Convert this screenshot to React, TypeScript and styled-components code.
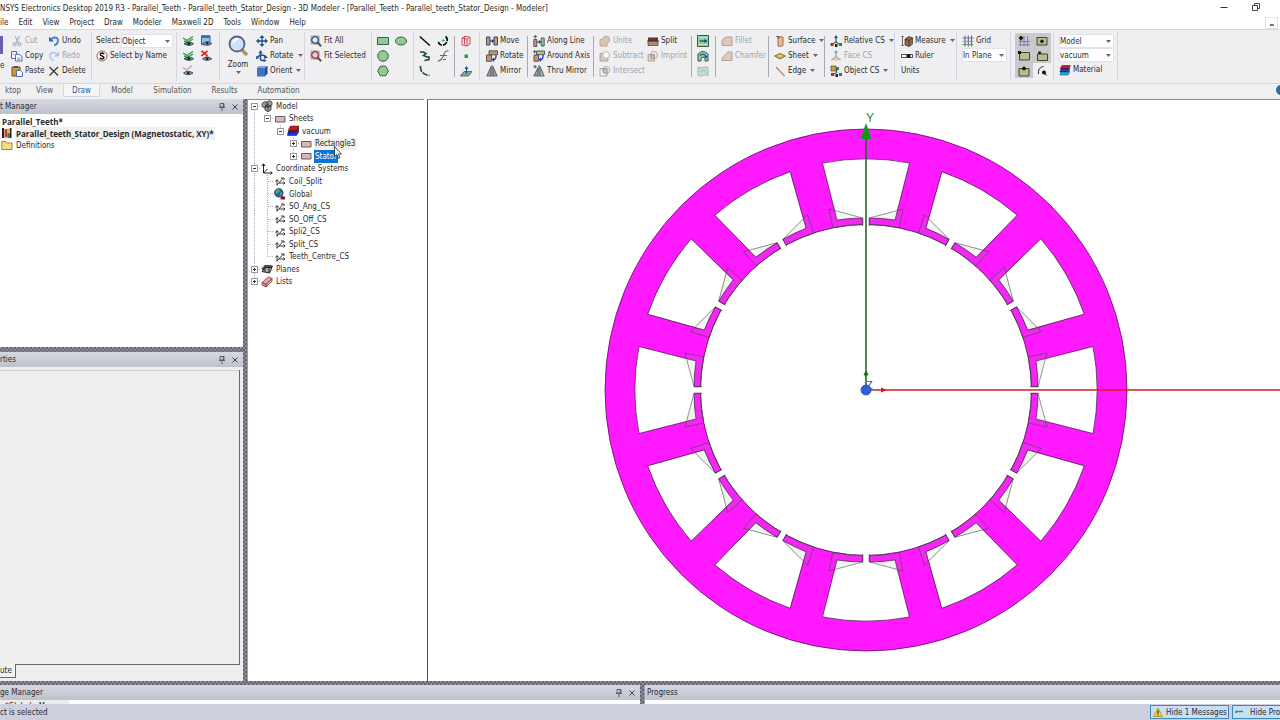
import React from 'react';
import styled, { createGlobalStyle, css } from 'styled-components';

const GlobalStyle = createGlobalStyle`
  * { box-sizing: border-box; }
  html, body, #root { height: 100%; }
  body { margin: 0; overflow: hidden; background: #fff; }
  body, button, select, input { font-family: "DejaVu Sans Condensed", "Open Sans", sans-serif; font-size: 8px; line-height: 13px; color: #2a2a2a; }
  button { margin: 0; padding: 0; border: 0; background: none; }
`;

/* ---------- icons ---------- */

const G = '#8fcb93';
const GD = '#3f5f45';
const TAN = '#b89a78';

const glyphs: Record<string, React.ReactNode> = {
  cut: <g fill="none" stroke="#a9b1cf" strokeWidth="1.3"><path d="M4 1l3.500 7M8.500 1L5 8" /><circle cx="3.600" cy="9.300" r="1.500" /><circle cx="8.400" cy="9.300" r="1.500" /></g>,
  copy: <g stroke="#4e6fb5" fill="#fff"><path d="M.5 1.500h5v7h-5z" /><path d="M4.500 4.500h4l2.500 2v4.500h-6.500z" /><path d="M1.500 4h3M6 8h3.500M6 9.500h3.500" stroke="#88a6dd" /></g>,
  paste: <g><path d="M1 2h8v9H1z" fill="#c79a3c" stroke="#6f5420" /><path d="M3 1h4v2H3z" fill="#555" /><path d="M5.500 5.500h4l2 2v4h-6z" fill="#fff" stroke="#4e6fb5" /></g>,
  undo: <g><path d="M3 4.500C6 1 10.500 2.500 10 6 9.700 8.500 8 10 6 10.500" fill="none" stroke="#4a7bd0" strokeWidth="1.800" /><path d="M1 1.500v5h5z" fill="#2f63c4" /></g>,
  redo: <g><path d="M9 4.500C6 1 1.500 2.500 2 6c.3 2.500 2 4 4 4.500" fill="none" stroke="#b4c8ee" strokeWidth="1.600" /><path d="M11 1.500v5H6z" fill="#a9c0ea" /></g>,
  del: <path d="M1.500 2l8.500 8.500M10 2L1.500 10.500" stroke="#333" strokeWidth="1.200" />,
  byname: <g><circle cx="6" cy="6" r="5" fill="#fff" stroke="#9a4a4a" strokeWidth=".9" /><path d="M8 4.200C7.500 2.700 4.300 2.700 4.300 4.500 4.300 6.200 7.900 5.700 7.900 7.600 7.900 9.400 4.500 9.300 4 7.700" fill="none" stroke="#111" strokeWidth="1.500" /></g>,
  eyeG: <g><path d="M1 3l4 2.500L11 1.500M2 6l3 1.500L11 4" fill="none" stroke="#2f9a4a" strokeWidth="1.400" /><path d="M2 8.800Q7 5 11.500 8.800 7 12 2 8.800z" fill="#5f8f78" stroke="#234" strokeWidth=".8" /><circle cx="6.800" cy="8.600" r="1.400" fill="#122" /></g>,
  eyeW: <g><path d="M1.500.8h8.500v9H1.500z" fill="#8fc0e6" stroke="#386a9a" /><path d="M1.500.8h8.500v2H1.500z" fill="#2f66a8" /><path d="M2.500 8.500Q7 5 11.800 8.500 7 11.800 2.500 8.500z" fill="#a8b4b8" stroke="#234" strokeWidth=".8" /><circle cx="7.200" cy="8.300" r="1.300" fill="#122" /></g>,
  eyeR: <g><path d="M1.500.8l6 5M7.500.8l-6 5" stroke="#e02020" strokeWidth="1.700" /><path d="M2.500 8.800Q7 5 11.800 8.800 7 12 2.500 8.800z" fill="#8a9a90" stroke="#234" strokeWidth=".8" /><circle cx="7.200" cy="8.600" r="1.300" fill="#122" /></g>,
  eyeP: <g><path d="M1 2.500l3.500 2.500L10 .8" fill="none" stroke="#c89ad0" strokeWidth="1.400" /><path d="M1.500 8Q6 4.500 11 8 6 11.500 1.500 8z" fill="#8aa89a" stroke="#234" strokeWidth=".8" /><circle cx="6.300" cy="8" r="1.300" fill="#122" /></g>,
  pan: <g stroke="#1d4d8c" fill="#1d4d8c"><path d="M6 2v8M2 6h8" strokeWidth="1.300" /><path d="M6 0l2.500 2.900h-5zM6 12l2.500-2.900h-5zM0 6l2.900-2.500v5zM12 6L9.100 3.500v5z" stroke="none" /></g>,
  rotate: <g fill="none" stroke="#1d4d8c" strokeWidth="1.500"><path d="M4.500 2v7q0 2 4 1.500" /><path d="M1.500 7q4.500-4 8.500 0" /><path d="M2.300 3.200L4.500.3 6.800 3.200zM8.500 4.800l3.300 3-3.800 1zM0 9.300l.3-3.600 3 2.300zM7.500 8.700l3 1.700-2.700 1.600z" fill="#1d4d8c" stroke="none" /></g>,
  orient: <g><path d="M1 3l2.500-2H11.500v7.500L9 11.300H1z" fill="#254a8c" /><path d="M1 3h8v8.300H1z" fill="#3f74c4" /><path d="M1 3l2.500-2h8L9 3z" fill="#7ba4e0" /></g>,
  fitall: <g fill="none"><path d="M1 1h8v8H1z" stroke="#888" strokeWidth=".8" /><circle cx="5" cy="5" r="3.300" fill="#dbe9f7" stroke="#2f4a80" strokeWidth="1.300" /><path d="M7.500 7.500l3.700 3.700" stroke="#555" strokeWidth="2" /></g>,
  fitsel: <g fill="none"><path d="M1 1h8v8H1z" stroke="#888" strokeWidth=".8" /><circle cx="5" cy="5" r="3.300" fill="#f3c6cf" stroke="#8a3a4e" strokeWidth="1.300" /><path d="M7.500 7.500l3.700 3.700" stroke="#555" strokeWidth="2" /></g>,
  rect: <path d="M.5 2.500h11v7H.5z" fill={G} stroke={GD} />,
  ellipse: <ellipse cx="6" cy="6" rx="5.500" ry="4" fill={G} stroke={GD} />,
  circle: <circle cx="6" cy="6" r="5.300" fill={G} stroke={GD} />,
  hex: <path d="M3.300 1.200h5.400L11.300 6l-2.600 4.800H3.300L.7 6z" fill={G} stroke={GD} />,
  line: <path d="M.8 1.500l10 9" stroke="#111" strokeWidth="1.600" />,
  arc3: <g fill="none" stroke="#111" strokeWidth="1.700"><path d="M8.500 1.500C12.500 4.500 9 11 4.500 10 2.500 9.500 1.500 8 1.500 6.500" strokeDasharray="5 1" /><path d="M5 5.500h2.500" stroke="#3a7" /></g>,
  spline: <path d="M1 2h3.500L7 3.500 4.500 5.500 8 7H10v2.500L5.500 10.500" fill="none" stroke="#1b4a35" strokeWidth="1.600" />,
  fx: <path d="M11.500.8C7 1 7.500 3 6.500 5.500S4 11 .8 11M3 5.500h7M6 9.500h3" fill="none" stroke="#666" strokeWidth="1.100" />,
  arc: <path d="M1.500 1v2C2 7.500 5.500 10 10.500 10.500" fill="none" stroke="#1b4a35" strokeWidth="1.700" strokeDasharray="6 1" />,
  cyl: <g fill="#f7dfe2" stroke="#c43c50" strokeWidth=".9"><path d="M2 3l3-1.800 5 1V9l-3 2-5-1z" /><path d="M2 3l5 1.200L10 2.200M7 4.200V11M4.500 2v7.500" /></g>,
  point: <path d="M4.500 4.500h3.500v3.500H4.500z" fill="#2f9a3f" />,
  plane: <g><path d="M1 10l3-3.500h8L8.500 11H.5z" fill="#7fae88" stroke={GD} strokeWidth=".8" /><path d="M6.500 9V2" stroke="#234aa0" strokeWidth="1.200" /><path d="M4.500 4l2-3 2 3z" fill="#234aa0" /></g>,
  move: <g><path d="M.5 2h3.500v8H.5zM8 2h3.500v8H8z" fill={TAN} stroke="#3b3b46" strokeWidth=".9" /><path d="M4 6h3" stroke="#1d2fb0" strokeWidth="1.200" /><path d="M6 4l2.300 2L6 8z" fill="#1d2fb0" /></g>,
  rot2: <g><path d="M3 .8h8.500v4H3z" fill={TAN} stroke="#4a3b2e" strokeWidth=".8" /><path d="M.5 5h5v6.300h-5z" fill={TAN} stroke="#4a3b2e" strokeWidth=".8" /><path d="M10 5c.5 3-1 4.800-3 4.800" fill="none" stroke="#1d2fd0" strokeWidth="1.300" /><path d="M8 7.300v4.700L5.800 9.700z" fill="#1d2fd0" /></g>,
  mirror: <g><path d="M5 1.500V11H.8zM7 1.500V11h4.200z" fill={TAN} stroke="#4a4a5a" strokeWidth=".8" /><path d="M6 0v12" stroke="#2b3d9a" strokeWidth=".8" /></g>,
  along: <g><path d="M.8 4.500h3v7h-3z" fill={TAN} stroke="#3b3b46" strokeWidth=".8" /><path d="M8.200 3h3v8h-3z" fill={G} stroke="#3b3b46" strokeWidth=".8" /><path d="M4 7h3" stroke="#1d2fb0" /><path d="M6 5l2.200 2L6 9z" fill="#1d2fb0" /><path d="M2.300 0v3.500M.6 1.700h3.500" stroke="#333" strokeWidth=".8" /></g>,
  around: <g><path d="M3.500 1h8v3.700h-8z" fill={G} stroke="#3b3b46" strokeWidth=".8" /><path d="M1 5h4.500v6.300H1z" fill={TAN} stroke="#4a3b2e" strokeWidth=".8" /><path d="M10 5c.5 3-1 4.800-3 4.800" fill="none" stroke="#1d2fd0" strokeWidth="1.300" /><path d="M8 7.300v4.700L5.800 9.700z" fill="#1d2fd0" /><path d="M1.700 0v3.500M0 1.700h3.500" stroke="#333" strokeWidth=".8" /></g>,
  thru: <g><path d="M5 2.500V11H.8z" fill={TAN} stroke="#4a4a5a" strokeWidth=".8" /><path d="M7 1.500V11h4.200z" fill={G} stroke="#4a4a5a" strokeWidth=".8" /><path d="M6 0v12" stroke="#2b3d9a" strokeWidth=".8" /><path d="M2 0v3.500M.3 1.700h3.500" stroke="#333" strokeWidth=".8" /></g>,
  unite: <path d="M1 4.500h2.500Q4 1 7.500 1.200 11 1.700 10.700 5 10.500 7.500 8 8v3H1z" fill="#dcc5b2" stroke="#b09a8a" strokeWidth=".8" />,
  subtract: <g strokeWidth=".8"><path d="M1 3.500h5v4.500h3v3H1z" fill="#dcc5b2" stroke="#999" /><circle cx="7.200" cy="5" r="3.500" fill="#f8f8f8" stroke="#aaa" /></g>,
  intersect: <g fill="#f2f0ee" stroke="#999" strokeWidth=".8"><path d="M1 3.500h7V11H1z" /><circle cx="7.200" cy="5" r="3.500" fill="none" /><path d="M4 4h4v4H5z" fill="#d9c0ac" /></g>,
  split: <g><path d="M1 2.500h10V6H1z" fill="#5a3a2c" /><path d="M1 6h10v4.500H1z" fill="#b08a70" stroke="#5a3a2c" strokeWidth=".7" /><path d="M0 6h12" stroke="#333" strokeWidth=".8" /></g>,
  imprint: <g stroke="#a09890" strokeWidth=".8" fill="#e3cfbf"><path d="M1 4.500h6.500V11H1z" /><circle cx="7" cy="5" r="3.500" fill="none" /><path d="M4 5h3.500v3.500H4z" fill="#d4b8a4" /></g>,
  sweepV: <g><path d="M.5.5h11v11H.5z" fill="#8fcfa0" stroke="#2e5d55" /><path d="M1 2.500h10M1 9.500h10" stroke="#e7dc8a" /><path d="M2.500 6h6" stroke="#153a9a" strokeWidth="1.200" /><path d="M7.500 4l3 2-3 2z" fill="#153a9a" /></g>,
  sweepA: <g><path d="M1 11V4q5-5 10 0v7H8V8Q6 6 4 8v3z" fill="#8fcfa0" stroke="#2e5d55" /><path d="M3 5.500q4-3 6 1" fill="none" stroke="#153a9a" strokeWidth="1.100" /><path d="M7.500 6h3L9 8.500z" fill="#153a9a" /></g>,
  sweepP: <g opacity=".6"><path d="M1 2q2 1.500 4 .5t6 0v8q-3-1.500-5 0t-5 0z" fill="#a5d6b4" stroke="#6d9c8f" /><path d="M3 7q3-3 6-1" fill="none" stroke="#7189b9" /></g>,
  fillet: <path d="M1 10.500V7Q1.500 2 7 2h4v8.500z" fill="#dcc9bb" stroke="#a99a8e" strokeWidth=".9" />,
  chamfer: <path d="M1 10.500V8l6-6h4v8.500z" fill="#dcc9bb" stroke="#a99a8e" strokeWidth=".9" />,
  surface: <g><path d="M4 3v8q2.500 1 5-.5V2Q6 1 4 3z" fill="#e8b890" stroke="#8a5a38" strokeWidth=".8" /><path d="M2 1.500h3M3 3.500l3-2" stroke="#555" strokeWidth=".9" /></g>,
  sheet: <g><path d="M.5 6L6 3.500 11.500 6 6 9z" fill="#c9a83c" stroke="#7a651e" strokeWidth=".8" /><path d="M4 6h4" stroke="#fff2a8" /></g>,
  edge: <path d="M2 2l8.500 9" stroke="#b08468" strokeWidth="1.100" />,
  relcs: <g><path d="M6 7V2" stroke="#1d4fb0" strokeWidth="1.300" /><path d="M4 3l2-3 2 3z" fill="#1d4fb0" /><path d="M6 7L2 9.500" stroke="#c22" strokeWidth="1.300" /><path d="M6 7l4 2.500" stroke="#191" strokeWidth="1.300" /><path d="M.5 8h3v3h-3z" fill="#c22" /><path d="M9 8h3v3H9z" fill="#191" /><path d="M5 9h2.500v3H5z" fill="#222" /></g>,
  facecs: <g opacity=".5"><path d="M1 9l4-3 6 2-4 3.500z" fill="#d9ad98" /><path d="M6 8V2" stroke="#1d4fb0" strokeWidth="1.300" /><path d="M4 3l2-3 2 3z" fill="#1d4fb0" /><path d="M5 8l-4 2.500" stroke="#c22" /><path d="M7 8l4 2" stroke="#191" /></g>,
  objcs: <g><path d="M1 1h5v5H1z" fill="#c9a23c" stroke="#543" strokeWidth=".7" /><path d="M6 2h3v3H6z" fill="#2a8a3a" /><path d="M6.500 8V4" stroke="#1d4fb0" strokeWidth="1.200" /><path d="M6 8l-4 2" stroke="#c22" strokeWidth="1.300" /><path d="M1 8h3v3H1z" fill="#c22" /><path d="M9 8h3v3H9z" fill="#191" /><path d="M5.500 9H8v3H5.500z" fill="#222" /></g>,
  measure: <g><path d="M1.500 1.500v9M.3 1.500h2.500M.3 10.500h2.500" stroke="#555" strokeWidth=".9" /><path d="M4 4l4-2.500 3.700 1.500v6L8 11.500 4 10z" fill="#8a6a50" stroke="#3a2a20" strokeWidth=".7" /><path d="M4 4l4 1.500 3.700-2.500M8 5.500v6" fill="none" stroke="#3a2a20" strokeWidth=".7" /></g>,
  ruler: <g><path d="M.5 4.500h11v3H.5z" fill="#fff" stroke="#333" strokeWidth=".9" /><path d="M5.500 4.500h4v3h-4z" fill="#111" /></g>,
  grid: <g strokeWidth=".9"><path d="M3 .5v11M6.300 .5v11M9.500.5v11" stroke="#547" /><path d="M.5 3h11" stroke="#4a6fb5" /><path d="M.5 6.300h11" stroke="#b57a4a" /><path d="M.5 9.500h11" stroke="#4a9a6a" /></g>,
  snapgrid: <g><path d="M6 1v10M9.500 1v10M1 6.500h11M1 10h11M2.500 4v7" stroke="#6b78b8" strokeWidth=".9" /><path d="M3 .5L5.500 3 3 5.500.5 3z" fill="#111" /></g>,
  snapcenter: <g><path d="M1 2.500h10v7.500H1z" fill="#b8bd8e" stroke="#34342a" strokeWidth=".9" /><circle cx="6" cy="6.200" r="1.700" fill="#111" /></g>,
  snapvert: <g><path d="M1.500 2.500h10V10h-10z" fill="#b8bd8e" stroke="#34342a" strokeWidth=".9" /><path d="M0 1h3v3H0z" fill="#111" /></g>,
  snapedge: <g><path d="M4 1.500l1.500 2.500" stroke="#34342a" strokeWidth=".9" /><path d="M1.500 4v6.500h10V4z" fill="#b8bd8e" stroke="#34342a" strokeWidth=".9" /><circle cx="3.500" cy="2.800" r="1.400" fill="#111" /></g>,
  snapmid: <g><path d="M1 3.500h10V11H1z" fill="#b8bd8e" stroke="#34342a" strokeWidth=".9" /><path d="M3.500 4L6 1l2.500 3L6 5.500z" fill="#111" /></g>,
  snapquad: <g><path d="M2.500 9Q1.500 2.500 7.500 1.500" fill="none" stroke="#333" /><circle cx="8" cy="7.500" r="2" fill="#111" /><path d="M8 7.500l2.500 3" stroke="#111" /></g>,
  material: <g><path d="M3 1.500h8.500L9.500 5H1z" fill="#c41a2a" stroke="#500" strokeWidth=".5" /><path d="M2.500 4.500H11L9 8H.8z" fill="#2433cf" stroke="#114" strokeWidth=".5" /><path d="M2 8h7.500l1-1.500v2L9 11H1z" fill="#19b3d6" stroke="#134" strokeWidth=".5" /></g>,
  vacuum: <g><path d="M3.500 1H12L9.500 4.500H1.500z" fill="#c41a1a" stroke="#511" strokeWidth=".5" /><path d="M1.500 4.500h8L12 1v2.500L9.500 7H1z" fill="#7a1414" /><path d="M1 7h8.500L12 3.500v3L9.500 10.500H.5z" fill="#1d2fd6" stroke="#114" strokeWidth=".5" /></g>,
  model: <g stroke="#333" strokeWidth=".8"><path d="M1 3.500l3-2 3 1v3.500L4 8 1 6.500zM5 3l3-2.500 3 1.500v3L8 7 5 5.500zM4 6l3-1.500L10 6v4l-3 1.700L4 10z" fill="#a0a0a0" /><path d="M4 6l3 1.500L10 6M7 7.500v4" fill="none" /></g>,
  sheetRect: <path d="M1.500 3.500h9.500v5.500H1.500z" fill="#deb4b7" stroke="#5f5f5f" />,
  axes: <g fill="none" stroke="#222" strokeWidth="1"><path d="M2.500 1v9h8.500M2.500 10l4-4" /><path d="M.8 3L2.500.8 4 3M9.500 8.500L11.300 10l-1.800 1.500" /></g>,
  cs: <g fill="none" stroke="#222" strokeWidth=".9"><path d="M3 5v5.500M3 10l6-6.500M5 8h6M1.500 6.500L3 4.500l1.500 2M7 3h3v2M9.500 6.500L11 8 9.500 9.500" /></g>,
  globe: <g><circle cx="4.800" cy="4.800" r="4.300" fill="#1f5fc0" stroke="#123" strokeWidth=".6" /><path d="M2 2l3-1 1 2-2 2-2 1zM6 5l2-1v3L6 8z" fill="#48b060" /><path d="M6.500 8.500H11v3H6.500z" fill="#a22" /><path d="M8 6.500v3l3 .5" stroke="#222" fill="none" /></g>,
  planes: <g stroke="#222" strokeWidth="1" fill="#777"><path d="M.8 6L4 2.500l7.500 .5-3 4z" /><path d="M1 8.500l3-4h7L8.500 10z" fill="#aaa" /><path d="M4 2.500v6M8 3v6.500" /></g>,
  lists: <g stroke="#7d3038" strokeWidth=".8" fill="#e5a9ae"><path d="M1 6.500L7.500 1l3.500 1.500L5 8.500z" /><path d="M1 6.500l4 2v2.500l-4-2zM5 8.500l6-6v2.800L5 11z" /></g>,
  folder: <path d="M.8 2.500h4l1 1.500H11v6.500H.8z" fill="#f0e084" stroke="#8f7c22" strokeWidth=".9" />,
  design: <g><path d="M1 1h2v10H1z" fill="#222" /><path d="M3.500 2h3v8.500h-3z" fill="#d03a2a" /><path d="M6.500 1.500h2.500v4H6.500z" fill="#e0b040" /><path d="M6.500 6h2.500v5H6.500z" fill="#2f8a3f" /><path d="M9 1h1.500v10H9z" fill="#222" /></g>,
  warn: <g><path d="M6 2l4.500 8.500h-9z" fill="#f5d13a" stroke="#a8871a" strokeWidth=".8" /><path d="M6 4.500v3.300M6 8.500v1" stroke="#222" strokeWidth="1.100" /></g>,
  progress: <path d="M2 7V5.500h7" fill="none" stroke="#2f9a4a" strokeWidth="1.500" />,
  pin: <path d="M4 2.500h4V6H4zM3 6.500h6M6 6.500V10M7.300 2.500v4" fill="none" stroke="#555" strokeWidth=".9" />,
  close: <path d="M3.500 3.500l5 5M8.500 3.500l-5 5" stroke="#444" strokeWidth="1" />,
  minimize: <path d="M2.500 5.500h7" stroke="#333" />,
  mdimin: <path d="M4 7h4" stroke="#333" strokeWidth="1.300" />,
  restore: <path d="M2.500 3.500h5v5h-5zM4.500 3V1.500h5v5H8" fill="none" stroke="#333" strokeWidth=".9" />,
};

const IconSvg = styled.svg`
  flex: none;
  display: block;
`;
const Icon = ({ name }: { name: string }) => (
  <IconSvg width="12" height="12" viewBox="0 0 12 12" aria-hidden="true">{glyphs[name]}</IconSvg>
);

const Arrow = () => (
  <IconSvg width="5" height="3" viewBox="0 0 5 3" aria-hidden="true"><path d="M0 0h5L2.500 3z" fill="#666" /></IconSvg>
);

/* ---------- window frame ---------- */

const Page = styled.div`
  display: flex;
  flex-direction: column;
  height: 100vh;
  overflow: hidden;
  white-space: nowrap;
`;
const TitleBar = styled.header`
  display: flex;
  align-items: center;
  justify-content: space-between;
  flex: none;
  height: 16px;
  padding-right: 18px;
`;
const WindowButtons = styled.div`
  display: flex;
  gap: 20px;
`;
const MenuBar = styled.nav`
  display: flex;
  align-items: center;
  flex: none;
  height: 13px;
  gap: 10px;
  padding-right: 2px;
`;
const MdiButton = styled.button`
  margin-left: auto;
  height: 12px;
  width: 13px;
  border: 1px solid #e4e4e8;
`;

/* ---------- ribbon ---------- */

const Ribbon = styled.div`
  display: flex;
  flex: none;
  height: 55px;
  padding: 2px 0;
  background: #efeff2;
  border-top: 1px solid #d4d6e2;
  border-bottom: 1px solid #d4d6e2;
`;
const Group = styled.div<{ $w: number; $pad?: number; $inner?: boolean }>`
  position: relative;
  display: flex;
  flex: none;
  width: ${p => p.$w}px;
  padding: 1px 0 0 ${p => p.$pad ?? 5}px;
  &::after {
    content: "";
    position: absolute;
    right: 0;
    top: ${p => (p.$inner ? 4 : 0)}px;
    bottom: ${p => (p.$inner ? 4 : 0)}px;
    width: 1px;
    background: ${p => (p.$inner ? '#a8a9b5' : '#d4d6e2')};
  }
`;
const Column = styled.div<{ $w?: number }>`
  display: flex;
  flex-direction: column;
  flex: none;
  width: ${p => (p.$w ? `${p.$w}px` : 'auto')};
`;
const Command = styled.button<{ $off?: boolean }>`
  display: flex;
  align-items: center;
  gap: 2px;
  height: 15px;
  ${p => p.$off && css`color: #a3a3a8;`}
`;
const ArrowSlot = styled.span`
  margin-left: 2px;
`;
const Cmd = ({ icon, text, off, menu }: { icon?: string; text?: string; off?: boolean; menu?: boolean }) => (
  <Command $off={off} disabled={off} aria-label={text ? undefined : icon}>
    {icon && <Icon name={icon} />}
    {text && <span>{text}</span>}
    {menu && <ArrowSlot><Arrow /></ArrowSlot>}
  </Command>
);

const FieldRow = styled.div`
  display: flex;
  align-items: center;
  height: 15px;
  gap: 1px;
`;
const FieldLabel = styled.label`
  width: 24px;
`;
const SelectBox = styled.div<{ $w: number }>`
  display: flex;
  position: relative;
  width: ${p => p.$w}px;
  height: 14px;
  svg { position: absolute; right: 3px; top: 6px; pointer-events: none; }
`;
const SelectInput = styled.select`
  appearance: none;
  width: 100%;
  padding: 0;
  border: 1px solid #e0e1ea;
  border-radius: 0;
  background: #fff;
`;
const Select = ({ id, label, value, w }: { id: string; label?: string; value: string; w: number }) => (
  <SelectBox $w={w}>
    <SelectInput id={id} aria-label={label} defaultValue={value}><option>{value}</option></SelectInput>
    <Arrow />
  </SelectBox>
);

const SaveSliver = styled.button`
  display: flex;
  flex-direction: column;
  align-items: flex-start;
  gap: 5px;
  width: 11px;
  &::before { content: ""; width: 3px; height: 18px; margin-top: 3px; background: #6b5fb3; }
`;
const ZoomButton = styled.button`
  display: flex;
  flex-direction: column;
  align-items: center;
  width: 24px;
  padding-top: 1px;
  margin-right: 6px;
`;
const SnapGrid = styled.div`
  display: grid;
  grid-template-columns: 18px 18px;
  grid-auto-rows: 15px;
`;
const SnapButton = styled.button<{ $on: boolean }>`
  display: flex;
  align-items: center;
  justify-content: center;
  background: ${p => (p.$on ? '#c9c9cb' : 'transparent')};
`;

/* ---------- tabs ---------- */

const TabBar = styled.div`
  display: flex;
  flex: none;
  height: 15px;
  background: #f0f0f0;
  overflow: hidden;
`;
const Tab = styled.button<{ $w: number; $active?: boolean }>`
  flex: none;
  width: ${p => p.$w}px;
  height: 13px;
  color: #555;
  ${p => p.$active && css`
    background: #f6f6f9;
    border: 1px solid #d4d6e2;
    border-top: 0;
    color: #1b5f9e;
  `}
`;
const HelpButton = styled.button`
  margin-left: auto;
  margin-right: -6px;
  margin-top: 1px;
  width: 10px;
  height: 10px;
  border-radius: 50%;
  background: #2c6da8;
  flex: none;
`;

/* ---------- work area ---------- */

const dither = css`
  background: repeating-conic-gradient(#62656f 0 25%, #8c8f9b 0 50%) 0 0 / 4px 4px;
`;
const Work = styled.main`
  display: flex;
  flex: 1;
  min-height: 0;
`;
const Dock = styled.div`
  display: flex;
  flex-direction: column;
  flex: none;
  width: 243px;
`;
const VSplit = styled.div`
  flex: none;
  width: 5px;
  ${dither}
  border-right: 1px solid #9a9da4;
`;
const HSplit = styled.div<{ $h: number }>`
  flex: none;
  height: ${p => p.$h}px;
  ${dither}
`;
const PanelHeader = styled.div`
  display: flex;
  align-items: center;
  flex: none;
  height: 15px;
  padding-right: 1px;
  background: linear-gradient(#d6d9e2, #bec1ca);
  > span { margin-right: auto; }
`;
const HeaderButton = styled.button`
  width: 13px;
`;
const ProjectList = styled.div`
  display: flex;
  flex-direction: column;
  flex: 1;
  padding: 1px;
  background: #fff;
`;
const ProjectRow = styled.div<{ $bold?: boolean; $lit?: boolean }>`
  display: flex;
  align-items: center;
  height: 12px;
  gap: 2px;
  ${p => p.$bold && css`font-family: "Open Sans", sans-serif; font-weight: 700;`}
  > span { padding: 0 1px; background: ${p => (p.$lit ? '#f0f0f0' : 'transparent')}; }
`;
const PropertyPane = styled.div`
  display: flex;
  flex-direction: column;
  flex: none;
  height: 314px;
  padding: 3px 3px 3px 0;
  background: #eee;
`;
const PropertyBody = styled.div`
  flex: 1;
  border: solid #6a6a6a;
  border-width: 0 1px 1px 0;
  box-shadow: inset 0 1px #d0d0d0;
`;
const PropertyTab = styled.button`
  flex: none;
  width: 16px;
  height: 14px;
  margin-top: -1px;
  background: #f2f2f2;
  border: solid #6a6a6a;
  border-width: 0 1px 1px 0;
  text-align: left;
`;

const TreePane = styled.div`
  position: relative;
  flex: none;
  width: 176px;
  margin-right: 3px;
  background: #fff;
  border-top: 1px solid #8a8a8a;
`;
const TreeList = styled.div`
  display: grid;
  grid-auto-rows: 1fr;
  height: 188px;
`;
const TreeRow = styled.div`
  display: flex;
  align-items: stretch;
  min-height: 0;
`;
const dots = 'repeating-linear-gradient(#b4b4b4 0 1px, transparent 1px 2px)';
const hdots = 'repeating-linear-gradient(90deg, #b4b4b4 0 1px, transparent 1px 2px)';
const Guide = styled.span<{ $v?: 'none' | 'full' | 'top' | 'bottom'; $h?: boolean }>`
  display: flex;
  align-items: center;
  justify-content: center;
  width: 13px;
  flex: none;
  background-image: ${dots}, ${hdots};
  background-repeat: no-repeat;
  background-position: 6px ${p => (p.$v === 'bottom' ? '100%' : '0')}, 100% 50%;
  background-size: 1px ${p => ({ none: '0', full: '100%', top: '50%', bottom: '50%' })[p.$v ?? 'none']}, ${p => (p.$h ? '6px 1px' : '0 0')};
`;
const Toggle = styled.button<{ $open: boolean }>`
  width: 7px;
  height: 7px;
  border: 1px solid #9a9a9a;
  background:
    linear-gradient(#333, #333) center / 3px 1px no-repeat,
    linear-gradient(#333, #333) center / ${p => (p.$open ? '0 0' : '1px 3px')} no-repeat,
    #fff;
`;
const TreeLabel = styled.span<{ $mark?: 'hover' | 'selected' }>`
  display: flex;
  align-items: center;
  margin-left: 2px;
  padding: 0 1px;
  ${p => p.$mark === 'hover' && css`background: #efefef;`}
  ${p => p.$mark === 'selected' && css`background: #0a74d4; color: #fff;`}
`;
const TreeIcon = styled.span`
  display: flex;
  align-items: center;
`;
const Pointer = styled.svg`
  position: absolute;
  left: 86px;
  top: 46px;
`;
const Canvas = styled.section`
  flex: 1;
  min-width: 0;
  background: #fff;
  border-top: 1px solid #8a8a8a;
  border-left: 1px solid #555;
`;
const Drawing = styled.svg`
  display: block;
  width: 100%;
  height: 100%;
  font-family: "Liberation Sans", sans-serif;
`;

/* ---------- bottom ---------- */

const BottomDock = styled.div`
  display: flex;
  flex: none;
  height: 19px;
`;
const BottomPanel = styled.div<{ $half?: boolean }>`
  flex: ${p => (p.$half ? '0 0 50%' : '1 1 0')};
  min-width: 0;
  overflow: hidden;
  background: #fff;
`;
const ProgressTitle = styled.span`
  padding-left: 2px;
`;
const MessageLine = styled.div`
  height: 12px;
  width: 69px;
  padding-left: 5px;
  background: #ececec;
`;
const StatusBar = styled.footer`
  display: flex;
  align-items: center;
  flex: none;
  height: 16px;
  gap: 3px;
  background: #cdd0dc;
  > span { margin-right: auto; }
`;
const StatusButton = styled.button<{ $w: number; $cut?: boolean }>`
  display: flex;
  align-items: center;
  width: ${p => p.$w}px;
  height: 14px;
  gap: 2px;
  padding-left: 1px;
  overflow: hidden;
  background: #c8e0f6;
  border: 1px solid #4186bd;
  ${p => p.$cut && css`border-right: 0; gap: 4px;`}
`;

/* ---------- data ---------- */

type V = 'none' | 'full' | 'top' | 'bottom';
interface Node { text: string; icon: string; guides: V[]; open?: boolean; mark?: 'hover' | 'selected' }

const tree: Node[] = [
  { text: 'Model', icon: 'model', guides: ['bottom'], open: true },
  { text: 'Sheets', icon: 'sheetRect', guides: ['full', 'top'], open: true },
  { text: 'vacuum', icon: 'vacuum', guides: ['full', 'none', 'top'], open: true },
  { text: 'Rectangle3', icon: 'sheetRect', guides: ['full', 'none', 'none', 'full'], open: false, mark: 'hover' },
  { text: 'Stator', icon: 'sheetRect', guides: ['full', 'none', 'none', 'top'], open: false, mark: 'selected' },
  { text: 'Coordinate Systems', icon: 'axes', guides: ['full'], open: true },
  { text: 'Coil_Split', icon: 'cs', guides: ['full', 'full'] },
  { text: 'Global', icon: 'globe', guides: ['full', 'full'] },
  { text: 'SO_Ang_CS', icon: 'cs', guides: ['full', 'full'] },
  { text: 'SO_Off_CS', icon: 'cs', guides: ['full', 'full'] },
  { text: 'Spli2_CS', icon: 'cs', guides: ['full', 'full'] },
  { text: 'Split_CS', icon: 'cs', guides: ['full', 'full'] },
  { text: 'Teeth_Centre_CS', icon: 'cs', guides: ['full', 'top'] },
  { text: 'Planes', icon: 'planes', guides: ['full'], open: false },
  { text: 'Lists', icon: 'lists', guides: ['top'], open: false },
];

const menus = ['ile', 'Edit', 'View', 'Project', 'Draw', 'Modeler', 'Maxwell 2D', 'Tools', 'Window', 'Help'];
const tabs: [string, number][] = [['ktop', 26], ['View', 37], ['Draw', 37], ['Model', 44], ['Simulation', 57], ['Results', 47], ['Automation', 61]];
const snaps = ['snapgrid', 'snapcenter', 'snapvert', 'snapedge', 'snapmid', 'snapquad'];

/* One slot of the stator, pointing up from the centre; repeated every 30 degrees. */
const Slot = ({ angle }: { angle: number }) => (
  <g transform={`rotate(${angle})`} strokeWidth=".7">
    <path
      d="M-3.300 -164V-172A172 172 0 0 0 -29 -170L-43.500 -227A231 231 0 0 1 43.500 -227L29 -170A172 172 0 0 0 3.300 -172V-164"
      fill="#fff" stroke="#3d1040"
    />
    {[1, -1].map(side => (
      <path
        key={side}
        transform={`scale(${side} 1)`}
        d="M3.300 -165.500V-172L37 -181L33 -162.200A165.500 165.500 0 0 0 3.300 -165.500z"
        fill="#8aa08a" fillOpacity=".1" stroke="#3c4a3c" strokeOpacity=".8"
      />
    ))}
  </g>
);

const Stator = () => (
  <Drawing viewBox="0 0 852 581" preserveAspectRatio="xMidYMid slice" role="img" aria-label="Stator cross-section">
    <g transform="translate(438 290)">
      <circle r="261" fill="#ff19ff" stroke="#5a0f5c" strokeWidth=".8" />
      <circle r="165.500" fill="#fff" stroke="#3d1040" strokeWidth=".8" />
      {Array.from({ length: 12 }, (_, i) => <Slot key={i} angle={i * 30} />)}
      <path d="M0 0V-254" stroke="#1f6b2a" strokeWidth="1.600" />
      <path d="M-5.500 -251L0 -267L5.500 -251z" fill="#0b9a14" />
      <path d="M-2 -15L0 -19L2 -15z" fill="#0b7a14" stroke="#0b7a14" />
      <path d="M0 0H2000" stroke="#d11f1f" strokeWidth="1.500" />
      <path d="M15 -2.500L21 0L15 2.500z" fill="#d11f1f" />
      <text x="0" y="-268" fontSize="12" fill="#1d8a2a">Y</text>
      <text x="0" y="-1" fontSize="11" fill="#2a55c8">Z</text>
      <circle r="5" fill="#2f5fd6" stroke="#2347a8" strokeWidth=".8" />
    </g>
  </Drawing>
);

const PanelButtons = () => (
  <>
    <HeaderButton aria-label="Pin"><Icon name="pin" /></HeaderButton>
    <HeaderButton aria-label="Close"><Icon name="close" /></HeaderButton>
  </>
);

const RibbonBar = () => (
  <Ribbon>
    <Group $w={92} $pad={0}>
      <SaveSliver>e</SaveSliver>
      <Column $w={37}><Cmd icon="cut" text="Cut" off /><Cmd icon="copy" text="Copy" /><Cmd icon="paste" text="Paste" /></Column>
      <Column><Cmd icon="undo" text="Undo" /><Cmd icon="redo" text="Redo" off /><Cmd icon="del" text="Delete" /></Column>
    </Group>
    <Group $w={85} $pad={4}>
      <Column>
        <FieldRow><FieldLabel htmlFor="pick">Select:</FieldLabel><Select id="pick" value="Object" w={52} /></FieldRow>
        <Cmd icon="byname" text="Select by Name" />
      </Column>
    </Group>
    <Group $w={43}>
      <Column $w={18}><Cmd icon="eyeG" /><Cmd icon="eyeG" /><Cmd icon="eyeP" /></Column>
      <Column><Cmd icon="eyeW" /><Cmd icon="eyeR" /></Column>
    </Group>
    <Group $w={85} $pad={6}>
      <ZoomButton>
        <IconSvg width="22" height="24" viewBox="0 0 22 24" aria-hidden="true">
          <path d="M14 15l6 6" stroke="#a89a5a" strokeWidth="3.500" />
          <circle cx="10" cy="10" r="7.500" fill="#cfe0f6" stroke="#5b6285" strokeWidth="1.800" />
          <path d="M6 9q1-4 5-4" stroke="#fff" strokeWidth="2" fill="none" />
        </IconSvg>
        <span>Zoom</span>
        <Arrow />
      </ZoomButton>
      <Column><Cmd icon="pan" text="Pan" /><Cmd icon="rotate" text="Rotate" menu /><Cmd icon="orient" text="Orient" menu /></Column>
    </Group>
    <Group $w={67}>
      <Column><Cmd icon="fitall" text="Fit All" /><Cmd icon="fitsel" text="Fit Selected" /></Column>
    </Group>
    <Group $w={42}>
      <Column $w={18}><Cmd icon="rect" /><Cmd icon="circle" /><Cmd icon="hex" /></Column>
      <Column><Cmd icon="ellipse" /></Column>
    </Group>
    <Group $w={41} $inner>
      <Column $w={18}><Cmd icon="line" /><Cmd icon="spline" /><Cmd icon="arc" /></Column>
      <Column><Cmd icon="arc3" /><Cmd icon="fx" /></Column>
    </Group>
    <Group $w={25}>
      <Column><Cmd icon="cyl" /><Cmd icon="point" /><Cmd icon="plane" /></Column>
    </Group>
    <Group $w={48} $pad={6} $inner>
      <Column><Cmd icon="move" text="Move" /><Cmd icon="rot2" text="Rotate" /><Cmd icon="mirror" text="Mirror" /></Column>
    </Group>
    <Group $w={66} $inner>
      <Column><Cmd icon="along" text="Along Line" /><Cmd icon="around" text="Around Axis" /><Cmd icon="thru" text="Thru Mirror" /></Column>
    </Group>
    <Group $w={98} $inner>
      <Column $w={48}><Cmd icon="unite" text="Unite" off /><Cmd icon="subtract" text="Subtract" off /><Cmd icon="intersect" text="Intersect" off /></Column>
      <Column><Cmd icon="split" text="Split" /><Cmd icon="imprint" text="Imprint" off /></Column>
    </Group>
    <Group $w={24} $inner>
      <Column><Cmd icon="sweepV" /><Cmd icon="sweepA" /><Cmd icon="sweepP" /></Column>
    </Group>
    <Group $w={53} $inner>
      <Column><Cmd icon="fillet" text="Fillet" off /><Cmd icon="chamfer" text="Chamfer" off /></Column>
    </Group>
    <Group $w={56} $inner>
      <Column><Cmd icon="surface" text="Surface" menu /><Cmd icon="sheet" text="Sheet" menu /><Cmd icon="edge" text="Edge" menu /></Column>
    </Group>
    <Group $w={70}>
      <Column><Cmd icon="relcs" text="Relative CS" menu /><Cmd icon="facecs" text="Face CS" off /><Cmd icon="objcs" text="Object CS" menu /></Column>
    </Group>
    <Group $w={62} $pad={6}>
      <Column><Cmd icon="measure" text="Measure" menu /><Cmd icon="ruler" text="Ruler" /><Cmd text="Units" /></Column>
    </Group>
    <Group $w={54}>
      <Column><Cmd icon="grid" text="Grid" /><Select id="plane" label="Drawing plane" value="In Plane" w={45} /></Column>
    </Group>
    <Group $w={43} $pad={4}>
      <SnapGrid>
        {snaps.map(s => <SnapButton key={s} $on={s !== 'snapquad'} aria-label={s}><Icon name={s} /></SnapButton>)}
      </SnapGrid>
    </Group>
    <Group $w={64}>
      <Column>
        <FieldRow><Select id="model" label="Model type" value="Model" w={55} /></FieldRow>
        <Select id="mat" label="Material" value="vacuum" w={55} />
        <Cmd icon="material" text="Material" />
      </Column>
    </Group>
  </Ribbon>
);

export default function App() {
  return (
    <Page>
      <GlobalStyle />
      <TitleBar>
        <span>NSYS Electronics Desktop 2019 R3 - Parallel_Teeth - Parallel_teeth_Stator_Design - 3D Modeler - [Parallel_Teeth - Parallel_teeth_Stator_Design - Modeler]</span>
        <WindowButtons>
          <button aria-label="Minimize"><Icon name="minimize" /></button>
          <button aria-label="Restore"><Icon name="restore" /></button>
        </WindowButtons>
      </TitleBar>
      <MenuBar>
        {menus.map(m => <button key={m}>{m}</button>)}
        <MdiButton aria-label="Minimize document"><Icon name="mdimin" /></MdiButton>
      </MenuBar>
      <RibbonBar />
      <TabBar>
        {tabs.map(([t, w]) => <Tab key={t} $w={w} $active={t === 'Draw'}>{t}</Tab>)}
        <HelpButton aria-label="Help" />
      </TabBar>
      <Work>
        <Dock>
          <PanelHeader><span>t Manager</span><PanelButtons /></PanelHeader>
          <ProjectList>
            <ProjectRow $bold><span>Parallel_Teeth*</span></ProjectRow>
            <ProjectRow $bold $lit><Icon name="design" /><span>Parallel_teeth_Stator_Design (Magnetostatic, XY)*</span></ProjectRow>
            <ProjectRow><Icon name="folder" /><span>Definitions</span></ProjectRow>
          </ProjectList>
          <HSplit $h={5} />
          <PanelHeader><span>rties</span><PanelButtons /></PanelHeader>
          <PropertyPane>
            <PropertyBody />
            <PropertyTab>ute</PropertyTab>
          </PropertyPane>
        </Dock>
        <VSplit />
        <TreePane>
          <TreeList>
            {tree.map(n => {
              const last = n.guides.length - 1;
              return (
                <TreeRow key={n.text}>
                  {n.guides.map((v, i) => (
                    <Guide key={i} $v={v} $h={i === last}>
                      {i === last && n.open !== undefined && <Toggle $open={n.open} aria-label={`Toggle ${n.text}`} />}
                    </Guide>
                  ))}
                  <TreeIcon><Icon name={n.icon} /></TreeIcon>
                  <TreeLabel $mark={n.mark}>{n.text}</TreeLabel>
                </TreeRow>
              );
            })}
          </TreeList>
          <Pointer width="8" height="13" viewBox="0 0 8 13" aria-hidden="true">
            <path d="M.5.5v10l2.300-2 1.700 3.800 1.500-.7-1.600-3.600H7.500z" fill="#fff" stroke="#222" strokeWidth=".8" />
          </Pointer>
        </TreePane>
        <Canvas><Stator /></Canvas>
      </Work>
      <HSplit $h={4} />
      <BottomDock>
        <BottomPanel $half>
          <PanelHeader><span>ge Manager</span><PanelButtons /></PanelHeader>
          <MessageLine>*Global - Me</MessageLine>
        </BottomPanel>
        <VSplit />
        <BottomPanel>
          <PanelHeader><ProgressTitle>Progress</ProgressTitle></PanelHeader>
        </BottomPanel>
      </BottomDock>
      <StatusBar>
        <span>ct is selected</span>
        <StatusButton $w={79}><Icon name="warn" /><span>Hide 1 Messages</span></StatusButton>
        <StatusButton $w={48} $cut><Icon name="progress" /><span>Hide Progress</span></StatusButton>
      </StatusBar>
    </Page>
  );
}
